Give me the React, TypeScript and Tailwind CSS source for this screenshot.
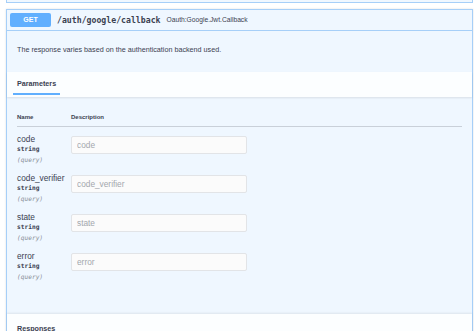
const params = ["code", "code_verifier", "state", "error"];

function ParamRow({ name }: { name: string }) {
  return (
    <div className="flex h-[39px] items-start">
      <div className="w-[54px] shrink-0 pt-[6.5px]">
        <div className="text-[8.3px] leading-[10px] text-[#3b4151]">{name}</div>
        <div className="pt-px font-['DejaVu_Sans_Mono',monospace] text-[6.2px] font-bold leading-[8px] text-[#3b4151]">
          string
        </div>
        <div className="pt-[3px] font-['DejaVu_Sans_Mono',monospace] text-[6.2px] italic leading-[8px] text-[#8a8f99]">
          (query)
        </div>
      </div>
      <div className="pt-[9px]">
        <input
          placeholder={name}
          className="block h-[18px] w-[176px] rounded-[2px] border border-[#e2e4e7] bg-[#fbfbfb] pl-[5px] text-[8.3px] text-[#3b4151] outline-none placeholder:text-[#a3a7ad]"
        />
      </div>
    </div>
  );
}

export default function App() {
  return (
    <div className="h-[331px] w-[474px] overflow-hidden bg-white font-['Liberation_Sans',Arial,sans-serif] text-[#3b4151]">
      {/* bottom of the previous operation */}
      <div className="ml-[6px] mr-px h-[3px] border-x border-b border-[#a6cff8] bg-[#eff7ff]" />

      <div className="ml-[6px] mr-px mt-[6px] border border-[#a6cff8] bg-[#eff7ff] shadow-[0_0_2px_rgba(0,0,0,0.12)]">
        {/* summary */}
        <div className="flex h-[21px] items-center gap-[6px] border-b border-[#a6cff8] pl-[3px]">
          <span className="flex h-[14px] w-[41px] items-center justify-center rounded-[2px] bg-[#61affe] text-[7px] font-bold text-white">
            GET
          </span>
          <span className="font-['DejaVu_Sans_Mono',monospace] text-[8.2px] font-bold text-[#3b4151]">
            /auth/google/callback
          </span>
          <span className="text-[6.7px] text-[#3b4151]">Oauth:Google.Jwt.Callback</span>
        </div>

        {/* description */}
        <div className="h-[41px] px-[10px] pt-[14px] text-[7.2px] leading-[10px]">
          The response varies based on the authentication backend used.
        </div>

        {/* parameters header */}
        <div className="flex h-[25px] items-start bg-[#fcfeff] px-[6px] shadow-[0_1px_2px_rgba(0,0,0,0.1)]">
          <div className="h-[23px] border-b-2 border-[#61affe] px-[4px] pt-[7px] text-[7.2px] font-bold leading-[10px]">
            Parameters
          </div>
        </div>

        {/* parameter table */}
        <div className="px-[10px] pb-[31px] pt-[16px]">
          <div className="flex border-b border-[#c9d0d9] pb-[5px] text-[6px] font-bold leading-[8px]">
            <div className="w-[54px]">Name</div>
            <div>Description</div>
          </div>
          {params.map((p) => (
            <ParamRow key={p} name={p} />
          ))}
        </div>

        {/* responses header */}
        <div className="h-[30px] bg-[#fcfeff] px-[10px] pt-[10px] text-[7.2px] font-bold leading-[10px] shadow-[0_-1px_2px_rgba(0,0,0,0.08)]">
          Responses
        </div>
      </div>
    </div>
  );
}
